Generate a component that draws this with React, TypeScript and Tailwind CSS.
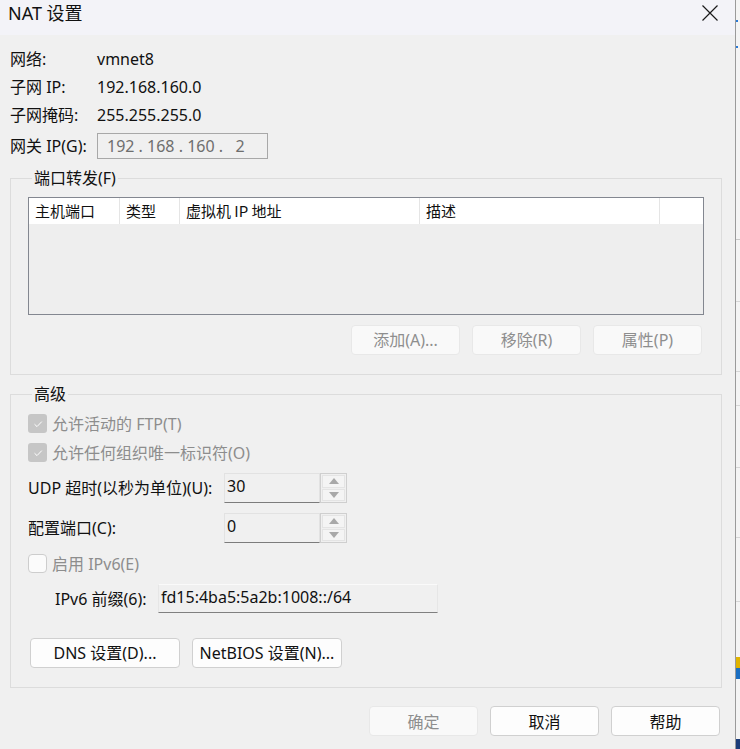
import React from 'react'

const ui = "font-['Noto_Sans','Noto_Sans_CJK_SC',sans-serif]"
const bitmap = "font-['Noto_Sans_CJK_SC','Noto_Sans',sans-serif]"

function Btn({ label, disabled, w, className = '' }: { label: string; disabled?: boolean; w: string; className?: string }) {
  return (
    <div
      className={`flex h-[30px] ${w} items-center justify-center rounded-[4px] border text-[16px] leading-[20px] ${
        disabled ? 'border-[#e8e8e8] bg-[#f9f9f9] text-[#8e8e8e]' : 'border-[#d0d0d0] bg-[#fdfdfd] text-[#111]'
      } ${className}`}
    >
      {label}
    </div>
  )
}

function Check({ checked, label }: { checked?: boolean; label: string }) {
  return (
    <div className="flex h-[29px] items-center gap-[5px]">
      {checked ? (
        <div className="flex h-[19px] w-[19px] items-center justify-center rounded-[3px] bg-[#c6c6c6]">
          <svg width="12" height="10" viewBox="0 0 12 10">
            <path d="M2.5 5.2 L5 7.6 L9.8 2.6" fill="none" stroke="#fff" strokeWidth="1" />
          </svg>
        </div>
      ) : (
        <div className="h-[19px] w-[19px] rounded-[4px] border border-[#cdcdcd] bg-[#fbfbfb]" />
      )}
      <span className="text-[16px] leading-[20px] text-[#8d8d8d]">{label}</span>
    </div>
  )
}

function Arrow({ up }: { up?: boolean }) {
  return (
    <svg width="10" height="6" viewBox="0 0 10 6">
      <polygon points={up ? '0,6 5,0 10,6' : '0,0 5,6 10,0'} fill="#a8a8a8" />
    </svg>
  )
}

function Spin({ value }: { value: string }) {
  return (
    <div className="flex h-[30px] w-[123px]">
      <div className="flex-1 border border-[#e2e2e2] border-b-[#7c7c7c] bg-[#f0f0f0] pl-[2px] text-[16px] leading-[24px] text-[#111]">
        {value}
      </div>
      <div className="flex w-[27px] flex-col gap-[1px] border border-[#cfcfcf] bg-[#f0f0f0] p-[1px]">
        <div className="flex flex-1 items-center justify-center border border-[#e4e4e4] bg-[#f4f4f4]">
          <Arrow up />
        </div>
        <div className="flex flex-1 items-center justify-center border border-[#e4e4e4] bg-[#f4f4f4]">
          <Arrow />
        </div>
      </div>
    </div>
  )
}

function Group({ title, children, className = '' }: { title: string; children: React.ReactNode; className?: string }) {
  return (
    <fieldset className={`ml-[10px] w-[712px] border border-[#dcdcdc] px-[17px] ${className}`}>
      <legend className="ml-[4px] px-[2px] text-[16px] leading-[20px] text-[#111]">{title}</legend>
      {children}
    </fieldset>
  )
}

const info = [
  ['网络:', 'vmnet8'],
  ['子网 IP:', '192.168.160.0'],
  ['子网掩码:', '255.255.255.0'],
]

const cols = [
  { name: '主机端口', w: 'w-[91px]' },
  { name: '类型', w: 'w-[60px]' },
  { name: '虚拟机 IP 地址', w: 'w-[240px]' },
  { name: '描述', w: 'w-[240px]' },
]

export default function App() {
  return (
    <div className={`flex h-[749px] w-[740px] overflow-hidden bg-[#f0f0f0] text-[#111] ${ui}`}>
      <div className="flex w-[735px] flex-col bg-[#f0f0f0]">
        {/* title bar */}
        <div className="flex h-[35px] items-start justify-between bg-[#f3f3f8] pl-[8px] pr-[17px]">
          <span className="mt-[2px] text-[18px] leading-[22px]">NAT 设置</span>
          <svg className="mt-[5px]" width="16" height="16" viewBox="0 0 16 16">
            <path d="M0.5 0.5 L15.5 15.5 M15.5 0.5 L0.5 15.5" stroke="#1a1a1a" strokeWidth="1.2" />
          </svg>
        </div>

        {/* info rows */}
        <div className="flex flex-col pl-[10px] pt-[10px]">
          {info.map(([k, v]) => (
            <div key={k} className="flex h-[28px] items-center text-[16px]">
              <span className="w-[87px]">{k}</span>
              <span>{v}</span>
            </div>
          ))}
          <div className="mt-[4px] flex h-[26px] items-center text-[16px]">
            <span className="w-[87px]">网关 IP(G):</span>
            <div className="flex h-[26px] w-[171px] items-center whitespace-pre border border-[#a8a8a8] bg-[#f0f0f0] pl-[9px] text-[16px] text-[#6e6e6e]">
              {'192 . 168 . 160 .   2'}
            </div>
          </div>
        </div>

        {/* port forwarding */}
        <Group title="端口转发(F)" className="mt-[9px] pb-[19px]">
          <div className="mt-[9px] flex h-[118px] w-[676px] flex-col border border-[#838790] bg-[#eeeeee]">
            <div className={`flex h-[26px] bg-white text-[15px] leading-[26px] ${bitmap}`}>
              {cols.map((c) => (
                <div key={c.name} className={`${c.w} border-r border-[#e5e5e5] pl-[6px]`}>
                  {c.name}
                </div>
              ))}
              <div className="flex-1" />
            </div>
          </div>
          <div className="mt-[10px] flex justify-end gap-[12px] pr-[2px]">
            <Btn label="添加(A)..." disabled w="w-[109px]" />
            <Btn label="移除(R)" disabled w="w-[109px]" />
            <Btn label="属性(P)" disabled w="w-[109px]" />
          </div>
        </Group>

        {/* advanced */}
        <Group title="高级" className="mt-[9px] pb-[19px]">
          <div className="mt-[5px] flex flex-col">
            <Check checked label="允许活动的 FTP(T)" />
            <Check checked label="允许任何组织唯一标识符(O)" />
          </div>
          <div className="mt-[6px] flex items-center">
            <span className="w-[196px] text-[16px]">UDP 超时(以秒为单位)(U):</span>
            <Spin value="30" />
          </div>
          <div className="mt-[10px] flex items-center">
            <span className="w-[196px] text-[16px]">配置端口(C):</span>
            <Spin value="0" />
          </div>
          <div className="mt-[6px]">
            <Check label="启用 IPv6(E)" />
          </div>
          <div className="mt-[6px] flex items-center pl-[27px]">
            <span className="w-[103px] text-[16px]">IPv6 前缀(6):</span>
            <div className="h-[29px] w-[280px] border border-[#e6e6e6] border-t-[#fafafa] border-b-[#808080] bg-[#f0f0f0] pl-[2px] text-[16px] leading-[24px]">
              fd15:4ba5:5a2b:1008::/64
            </div>
          </div>
          <div className="mt-[25px] flex gap-[12px] pl-[2px]">
            <Btn label="DNS 设置(D)..." w="w-[150px]" />
            <Btn label="NetBIOS 设置(N)..." w="w-[150px]" />
          </div>
        </Group>

        {/* dialog buttons */}
        <div className={`mt-[18px] flex justify-end gap-[12px] pr-[15px] ${bitmap}`}>
          <Btn label="确定" disabled w="w-[109px]" />
          <Btn label="取消" w="w-[109px]" />
          <Btn label="帮助" w="w-[109px]" />
        </div>
      </div>

      {/* edge of the window behind */}
      <div className="flex w-[5px] flex-col border-l border-[#9a9a9a] bg-[#f4f4f4]">
        <div className="h-[20px]" />
        <div className="h-[2px] w-[2px] bg-[#2a7ad6]" />
        <div className="h-[24px]" />
        <div className="h-[2px] w-[2px] bg-[#2a7ad6]" />
        <div className="h-[192px] border-b border-[#c8c8c8]" />
        <div className="h-[62px] border-b border-[#d6d6d6]" />
        <div className="h-[70px] border-b border-[#d6d6d6]" />
        <div className="h-[34px] border-b border-[#d6d6d6]" />
        <div className="h-[62px] border-b border-[#d6d6d6]" />
        <div className="h-[70px] border-b border-[#d6d6d6]" />
        <div className="h-[64px] border-b border-[#d6d6d6]" />
        <div className="h-[55px]" />
        <div className="h-[11px] bg-[#e0b400]" />
        <div className="h-[11px] bg-[#1b6fc2]" />
        <div className="h-[60px]" />
        <div className="flex-1 bg-[#1c3d7a]" />
      </div>
    </div>
  )
}
